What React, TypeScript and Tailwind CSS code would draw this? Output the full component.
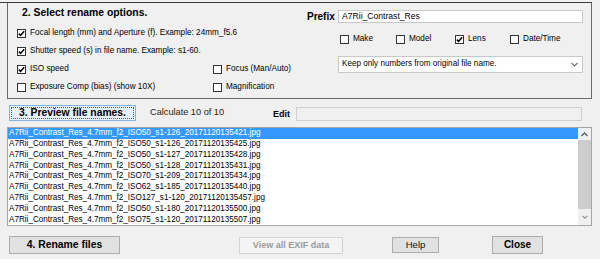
import React from "react";

const F = { fontFamily: '"Liberation Sans", Arial, sans-serif' };

function Check({ checked }: { checked?: boolean }) {
  return (
    <div className="w-[9px] h-[9px] border border-[#333333] bg-white flex items-center justify-center shrink-0">
      {checked && (
        <svg width="7" height="7" viewBox="0 0 7 7">
          <path d="M0.8 3.6 L2.6 5.4 L6.2 1.2" fill="none" stroke="#000" strokeWidth="1.5" />
        </svg>
      )}
    </div>
  );
}

function CB({ checked, label, w }: { checked?: boolean; label: string; w?: string }) {
  return (
    <div className={`flex items-center gap-[4px] ${w ?? ""}`}>
      <Check checked={checked} />
      <span className="text-[8.2px] leading-none text-black whitespace-nowrap">{label}</span>
    </div>
  );
}

const rows = [
  "A7Rii_Contrast_Res_4.7mm_f2_ISO50_s1-126_20171120135421.jpg",
  "A7Rii_Contrast_Res_4.7mm_f2_ISO50_s1-126_20171120135425.jpg",
  "A7Rii_Contrast_Res_4.7mm_f2_ISO50_s1-127_20171120135428.jpg",
  "A7Rii_Contrast_Res_4.7mm_f2_ISO50_s1-128_20171120135431.jpg",
  "A7Rii_Contrast_Res_4.7mm_f2_ISO70_s1-209_20171120135434.jpg",
  "A7Rii_Contrast_Res_4.7mm_f2_ISO62_s1-185_20171120135440.jpg",
  "A7Rii_Contrast_Res_4.7mm_f2_ISO127_s1-120_20171120135457.jpg",
  "A7Rii_Contrast_Res_4.7mm_f2_ISO50_s1-180_20171120135500.jpg",
  "A7Rii_Contrast_Res_4.7mm_f2_ISO75_s1-120_20171120135507.jpg",
];

export default function App() {
  return (
    <div className="w-[600px] h-[259px] bg-[#f0f0f0] overflow-hidden text-black" style={F}>
      <div className="w-[592px] h-[1px] mt-[2px] bg-[#3c3c3c]" />
      {/* Options box */}
      <div className="ml-[7px] w-[585px] h-[96px] border-l border-r border-b border-[#6a6a6a] flex">
        {/* left column */}
        <div className="w-[299px] flex flex-col pl-[9px]">
          <div className="h-[21px] flex items-center pl-[5px]">
            <span className="text-[10.4px] font-bold leading-none">2. Select rename options.</span>
          </div>
          <div className="h-[18px] flex items-center">
            <CB checked label="Focal length (mm) and Aperture (f). Example: 24mm_f5.6" />
          </div>
          <div className="h-[18px] flex items-center">
            <CB checked label="Shutter speed (s) in file name. Example: s1-60." />
          </div>
          <div className="h-[18px] flex items-center">
            <CB checked label="ISO speed" w="w-[196px]" />
            <CB label="Focus (Man/Auto)" />
          </div>
          <div className="h-[18px] flex items-center">
            <CB label="Exposure Comp (bias) (show 10X)" w="w-[196px]" />
            <CB label="Magnification" />
          </div>
        </div>
        {/* right column */}
        <div className="flex flex-col">
          <div className="mt-[7px] h-[13px] flex items-center">
            <span className="w-[31px] text-[10px] font-bold leading-none">Prefix</span>
            <div className="w-[245px] h-[13px] bg-white border border-[#c8c8c8] flex items-center pl-[3px]">
              <span className="text-[8.6px] leading-none">A7Rii_Contrast_Res</span>
            </div>
          </div>
          <div className="mt-[7px] h-[18px] flex items-center pl-[33px]">
            <CB label="Make" w="w-[56px]" />
            <CB label="Model" w="w-[59px]" />
            <CB checked label="Lens" w="w-[55px]" />
            <CB label="Date/Time" />
          </div>
          <div className="mt-[8px] ml-[31px] w-[245px] h-[17px] bg-white border border-[#c8c8c8] flex items-center pl-[3px] pr-[4px]">
            <span className="flex-1 text-[8.15px] leading-none">Keep only numbers from original file name.</span>
            <svg width="7" height="5" viewBox="0 0 7 5">
              <path d="M0.5 1 L3.5 4 L6.5 1" fill="none" stroke="#707070" strokeWidth="1.2" />
            </svg>
          </div>
        </div>
      </div>

      {/* Preview row */}
      <div className="mt-[6px] h-[16px] flex items-center">
        <div className="ml-[9px] w-[127px] h-[16px] border border-[#7fb4ea] bg-[#e5f1fb] p-[1px]">
          <div className="w-full h-full border border-dotted border-[#555] flex items-center justify-center">
            <span className="text-[10.35px] font-bold leading-none">3. Preview file names.</span>
          </div>
        </div>
        <span className="ml-[14px] text-[9.2px] leading-none text-[#222]">Calculate 10 of 10</span>
        <span className="ml-[49px] mt-[2px] text-[9px] font-bold leading-none">Edit</span>
        <div className="ml-[6px] mt-[2px] w-[286px] h-[14px] border border-[#cfcfcf] bg-[#f0f0f0]" />
      </div>

      {/* List */}
      <div className="mt-[6px] ml-[7px] w-[585px] h-[99px] border border-[#a5a5a5] bg-white flex">
        <div className="flex-1 flex flex-col">
          {rows.map((r, i) => (
            <div
              key={i}
              className={`h-[10.85px] flex items-center pl-[1px] ${i === 0 ? "bg-[#3399ff] text-white" : "text-black"}`}
            >
              <span className="text-[8.15px] leading-none whitespace-nowrap">{r}</span>
            </div>
          ))}
        </div>
        <div className="w-[13px] bg-[#f0f0f0] flex flex-col">
          <div className="h-[12px] flex items-center justify-center">
            <svg width="7" height="5" viewBox="0 0 7 5">
              <path d="M0.5 4 L3.5 1 L6.5 4" fill="none" stroke="#606060" strokeWidth="1.4" />
            </svg>
          </div>
          <div className="h-[69px] bg-[#cdcdcd]" />
          <div className="flex-1 flex items-center justify-center">
            <svg width="6" height="4" viewBox="0 0 6 4">
              <path d="M0.5 0.8 L3 3.2 L5.5 0.8" fill="none" stroke="#909090" strokeWidth="1.1" />
            </svg>
          </div>
        </div>
      </div>

      {/* Bottom buttons */}
      <div className="mt-[10px] h-[18px] flex items-center">
        <div className="ml-[9px] w-[111px] h-[18px] border border-[#adadad] bg-[#e1e1e1] flex items-center justify-center">
          <span className="text-[10.4px] font-bold leading-none">4. Rename files</span>
        </div>
        <div className="ml-[119px] w-[104px] h-[17px] border border-[#d3d3d3] bg-[#f4f4f4] flex items-center justify-center">
          <span className="text-[9px] font-bold leading-none text-[#9a9a9a]">View all EXIF data</span>
        </div>
        <div className="ml-[49px] w-[47px] h-[16px] border border-[#adadad] bg-[#e1e1e1] flex items-center justify-center">
          <span className="text-[9.6px] leading-none text-[#111]">Help</span>
        </div>
        <div className="ml-[53px] w-[51px] h-[18px] border border-[#adadad] bg-[#e1e1e1] flex items-center justify-center">
          <span className="text-[10px] font-bold leading-none">Close</span>
        </div>
      </div>
    </div>
  );
}
